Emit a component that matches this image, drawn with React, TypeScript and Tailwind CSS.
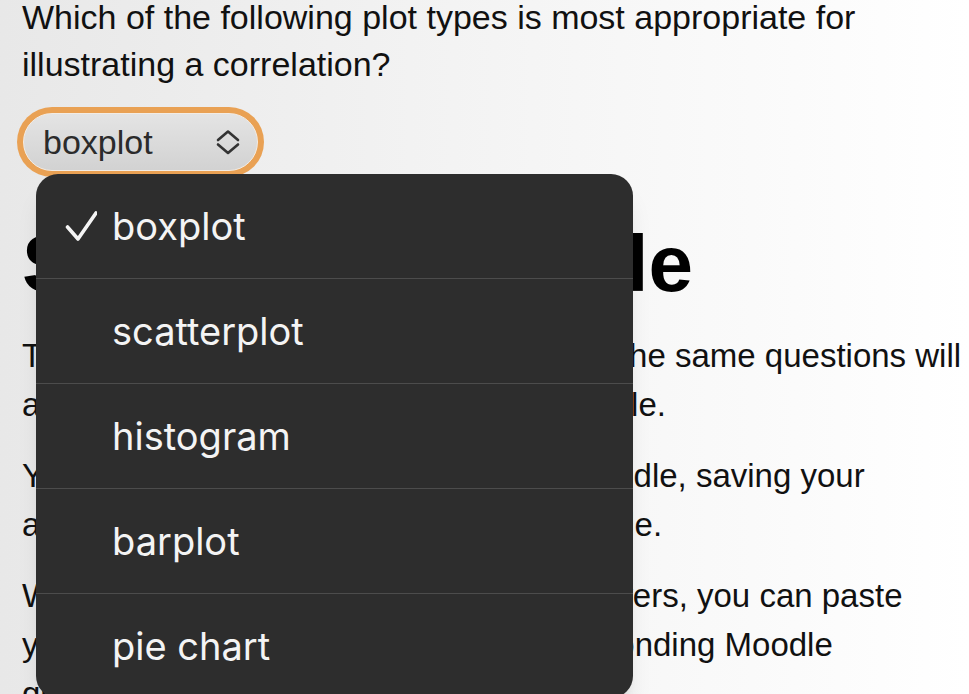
import React from "react";

const options = ["boxplot", "scatterplot", "histogram", "barplot", "pie chart"];

const Chevrons = () => (
  <svg width="26" height="26" viewBox="0 0 26 26" fill="none" stroke="#333" strokeWidth="2.6" strokeLinecap="round" strokeLinejoin="round">
    <polyline points="3,11 13,2.5 23,11" />
    <polyline points="3,15.5 13,24 23,15.5" />
  </svg>
);

const Check = () => (
  <svg width="32" height="30" viewBox="0 0 32 30" fill="none" stroke="#f4f4f4" strokeWidth="3.6" strokeLinecap="round" strokeLinejoin="round">
    <polyline points="2.5,16 13,28 31,2" />
  </svg>
);

const SelectMenu: React.FC = () => {
  return (
    <div className="relative ml-[-5px] mt-[19px] w-fit">
      {/* Select pill with focus ring */}
      <div className="rounded-full bg-[#e9a154] p-[6px]">
        <div className="flex h-[58px] w-[235px] items-center justify-between rounded-full border border-[#f3ece4] bg-linear-to-b from-[#e4e4e4] to-[#d2d2d2] pl-[19px] pr-[16px]">
          <span className="text-[34px] text-[#2b2b2b]">boxplot</span>
          <Chevrons />
        </div>
      </div>

      {/* Dropdown */}
      <div className="absolute left-[19px] top-[67px] z-10 w-[597px] overflow-hidden rounded-[22px] bg-[#2d2d2d] font-['Inter',sans-serif] text-[#f4f4f4] shadow-xl">
        {options.map((opt, i) => (
          <div
            key={opt}
            className={`flex items-center pl-[29px] ${i > 0 ? "h-[105px] border-t border-[#4c4c4c]" : "h-[104px]"}`}
          >
            <span className="flex w-[32px] justify-center">{i === 0 ? <Check /> : null}</span>
            <span className="ml-[15px] text-[38px]">{opt}</span>
          </div>
        ))}
      </div>
    </div>
  );
};

export default function App() {
  return (
    <div className="h-[694px] w-full overflow-hidden bg-linear-to-r from-[#e8e8e8] via-[#f5f5f5] via-55% to-white font-['Liberation_Sans',Arial,sans-serif] text-[#111]">
      <div className="pl-[22px]">
        <p className="mt-[-6px] text-[34px] leading-[47px]">
          Which of the following plot types is most appropriate for illustrating a correlation?
        </p>

        <SelectMenu />

        <h1 className="mt-[39px] text-[80px] font-bold leading-[96px] text-black">Submit to Moodle</h1>

        <div className="mt-[19px] flex flex-col gap-[22px] text-[33px] leading-[49px]">
          <p>This is a practice version of the quiz, but the same questions will appear in the actual graded quiz on Moodle.</p>
          <p>You can answer here before going to Moodle, saving your answers in your browser for use on Moodle.</p>
          <p>When you are happy with all of your answers, you can paste your answers from here onto the corresponding Moodle questions.</p>
        </div>
      </div>
    </div>
  );
}
